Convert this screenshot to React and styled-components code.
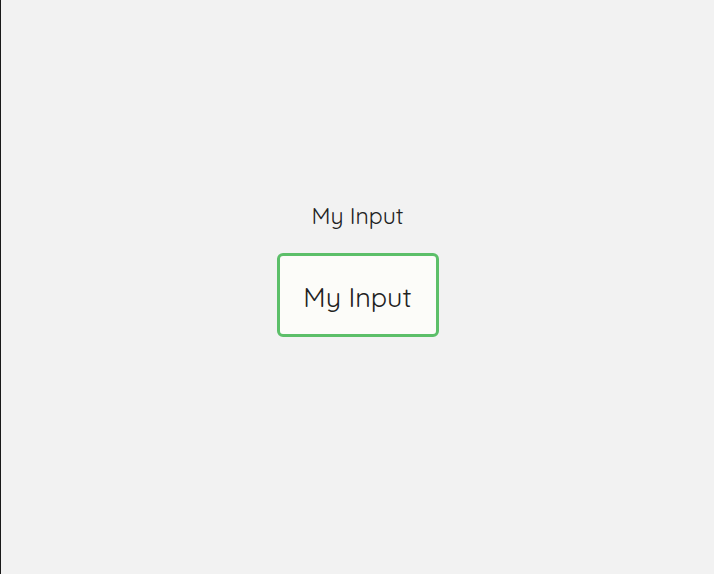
import React from 'react'
import styled, { createGlobalStyle } from 'styled-components'

const GlobalStyle = createGlobalStyle`
    body {
        margin: 0;
        background: #f2f2f2;
        font-family: "Quicksand", Lato, "Noto Sans", sans-serif;
    }
`

const Page = styled.div`
    min-height: 100vh;
    box-sizing: border-box;
    border-left: 1px solid #1a1a1a;
    display: flex;
    flex-direction: column;
    align-items: center;
    padding-top: 200px;
    gap: 21px;
`

const Label = styled.label`
    font-size: 23px;
    line-height: 32px;
    color: #222;
`

const Field = styled.input`
    box-sizing: border-box;
    width: 162px;
    height: 84px;
    border: 3px solid #5cbf69;
    border-radius: 6px;
    background: #fcfcf9;
    font-family: inherit;
    font-size: 27px;
    color: #222;
    text-align: center;
    outline: none;
    padding: 4px 0 0;
`

const App = () => (
    <Page>
        <GlobalStyle />
        <Label htmlFor="my-input">My Input</Label>
        <Field id="my-input" defaultValue="My Input" />
    </Page>
)

export default App
